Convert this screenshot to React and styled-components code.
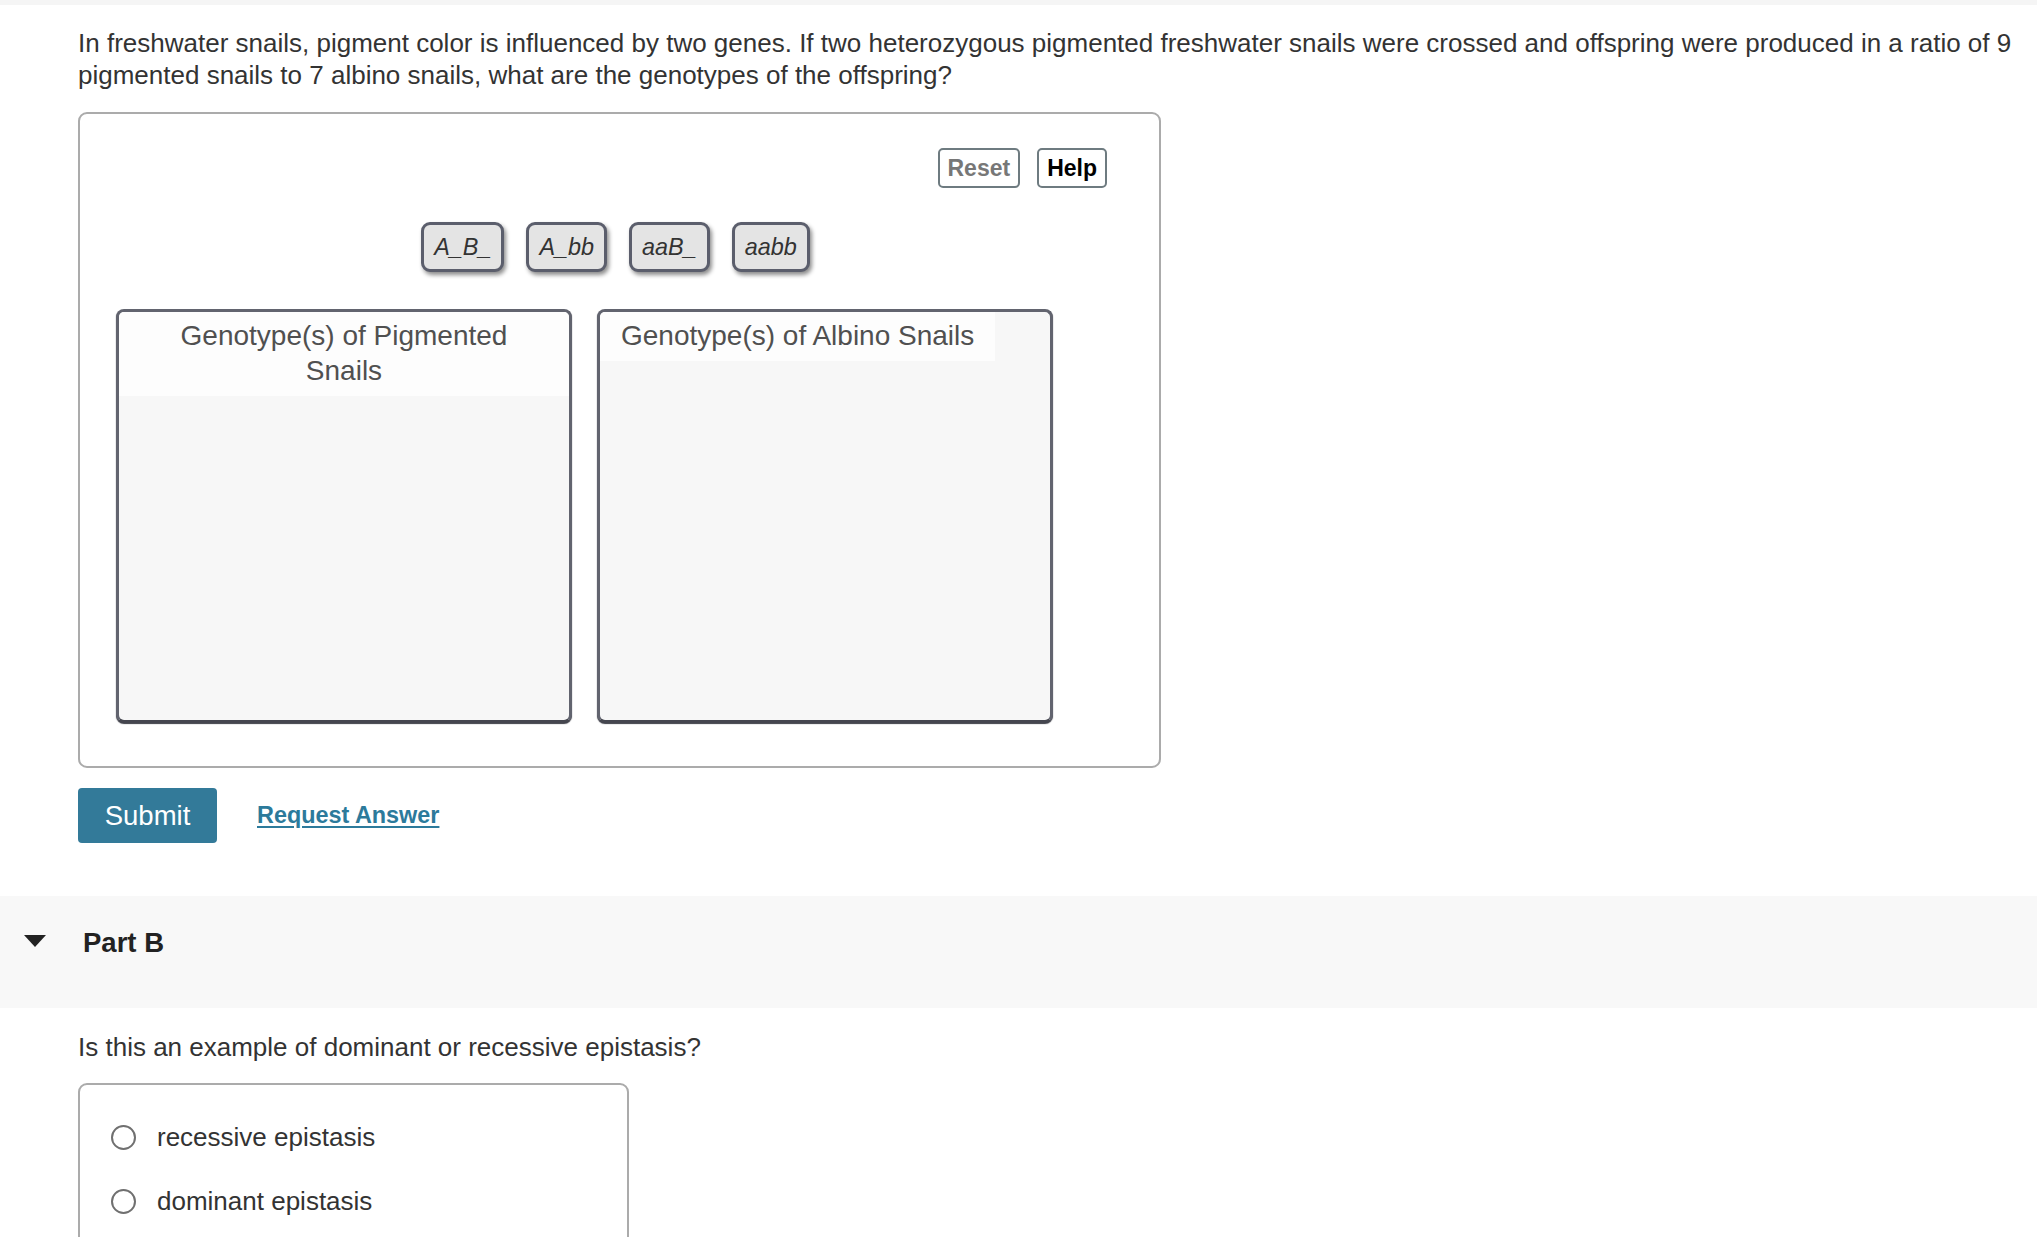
import styled, { createGlobalStyle } from "styled-components";

const GlobalStyle = createGlobalStyle`
  html, body {
    margin: 0;
    padding: 0;
    background: #fff;
    font-family: "Liberation Sans", Arial, Helvetica, sans-serif;
    color: #333;
  }
`;

const Page = styled.div`
  border-top: 5px solid #f5f5f5;
`;

const Section = styled.div`
  padding: 0 4px 0 78px;
`;

const Question = styled.p`
  margin: 22px 0 21px;
  font-size: 26px;
  line-height: 32px;
  color: #333;
`;

const Panel = styled.div`
  width: 1083px;
  box-sizing: border-box;
  border: 2px solid #ababab;
  border-radius: 9px;
  padding: 34px 36px 43px;
`;

const Toolbar = styled.div`
  display: flex;
  justify-content: flex-end;
  gap: 17px;
  padding-right: 16px;
`;

const ToolButton = styled.button`
  height: 40px;
  box-sizing: border-box;
  padding: 0 8px;
  border: 2px solid #6e7b80;
  border-radius: 5px;
  background: #fff;
  font-family: inherit;
  font-size: 23px;
  font-weight: bold;
  color: ${(p) => (p.$muted ? "#777" : "#000")};
`;

const TileRow = styled.div`
  display: flex;
  justify-content: center;
  gap: 22px;
  margin-top: 34px;
  padding-right: 8px;
`;

const Tile = styled.div`
  height: 50px;
  box-sizing: border-box;
  padding: 0 10px;
  display: flex;
  align-items: center;
  border: 3px solid #5b5e6c;
  border-radius: 9px;
  background: #e4e4e4;
  box-shadow: 2px 3px 4px rgba(0, 0, 0, 0.45);
  font-size: 23.4px;
  font-style: italic;
  color: #333;
`;

const Zones = styled.div`
  display: flex;
  gap: 25px;
  margin-top: 37px;
`;

const Zone = styled.div`
  width: 456px;
  height: 414px;
  box-sizing: border-box;
  border: 3px solid #62646f;
  border-bottom-color: #45464f;
  border-radius: 8px;
  background: #f7f7f7;
  box-shadow: 0 1px 1px #3c3d45;
  overflow: hidden;
  text-align: ${(p) => (p.$center ? "center" : "left")};
`;

const ZoneTitle = styled.div`
  display: inline-block;
  box-sizing: border-box;
  max-width: 100%;
  width: ${(p) => (p.$full ? "100%" : "auto")};
  padding: 6px 21px 8px;
  background: #fdfdfd;
  font-size: 28px;
  line-height: 35px;
  color: #505050;
  text-align: center;
`;

const Actions = styled.div`
  display: flex;
  align-items: center;
  gap: 40px;
  margin-top: 20px;
  margin-bottom: 53px;
`;

const SubmitButton = styled.button`
  width: 139px;
  height: 55px;
  border: none;
  border-radius: 4px;
  background: #337a99;
  color: #fff;
  font-family: inherit;
  font-size: 27.5px;
`;

const LinkText = styled.a`
  font-size: 23.4px;
  font-weight: bold;
  color: #2c7a9b;
  text-decoration: underline;
  text-underline-offset: 3px;
  cursor: pointer;
`;

const PartBar = styled.div`
  height: 112px;
  box-sizing: border-box;
  background: #f8f8f8;
  display: flex;
  align-items: center;
  padding: 0 0 18px 24px;
  gap: 37px;
`;

const Caret = styled.svg`
  width: 22px;
  height: 12px;
  margin-top: -4px;
`;

const PartTitle = styled.h2`
  margin: 0;
  font-size: 27.5px;
  font-weight: bold;
  color: #222;
`;

const SubQuestion = styled.p`
  margin: 23px 0 20px;
  font-size: 26px;
  line-height: 32px;
  color: #333;
`;

const ChoiceBox = styled.div`
  width: 551px;
  height: 200px;
  box-sizing: border-box;
  border: 2px solid #ababab;
  border-radius: 9px;
  padding: 34px 0 0 31px;
  display: flex;
  flex-direction: column;
  gap: 28px;
`;

const Choice = styled.label`
  display: flex;
  align-items: center;
  gap: 21px;
  height: 36px;
  font-size: 26px;
  color: #333;
`;

const Radio = styled.span`
  width: 25px;
  height: 25px;
  box-sizing: border-box;
  border: 2px solid #707070;
  border-radius: 50%;
  background: #fff;
`;

const tiles = ["A_B_", "A_bb", "aaB_", "aabb"];

export default function App() {
  return (
    <Page>
      <GlobalStyle />
      <Section>
        <Question>
          In freshwater snails, pigment color is influenced by two genes. If two heterozygous pigmented
          freshwater snails were crossed and offspring were produced in a ratio of 9 pigmented snails to 7
          albino snails, what are the genotypes of the offspring?
        </Question>
        <Panel>
          <Toolbar>
            <ToolButton $muted>Reset</ToolButton>
            <ToolButton>Help</ToolButton>
          </Toolbar>
          <TileRow>
            {tiles.map((t) => (
              <Tile key={t}>{t}</Tile>
            ))}
          </TileRow>
          <Zones>
            <Zone $center>
              <ZoneTitle $full>Genotype(s) of Pigmented Snails</ZoneTitle>
            </Zone>
            <Zone>
              <ZoneTitle>Genotype(s) of Albino Snails</ZoneTitle>
            </Zone>
          </Zones>
        </Panel>
        <Actions>
          <SubmitButton>Submit</SubmitButton>
          <LinkText>Request Answer</LinkText>
        </Actions>
      </Section>
      <PartBar>
        <Caret viewBox="0 0 22 12">
          <polygon points="0,0 22,0 11,12" fill="#222" />
        </Caret>
        <PartTitle>Part B</PartTitle>
      </PartBar>
      <Section>
        <SubQuestion>Is this an example of dominant or recessive epistasis?</SubQuestion>
        <ChoiceBox>
          <Choice>
            <Radio />
            recessive epistasis
          </Choice>
          <Choice>
            <Radio />
            dominant epistasis
          </Choice>
        </ChoiceBox>
      </Section>
    </Page>
  );
}
